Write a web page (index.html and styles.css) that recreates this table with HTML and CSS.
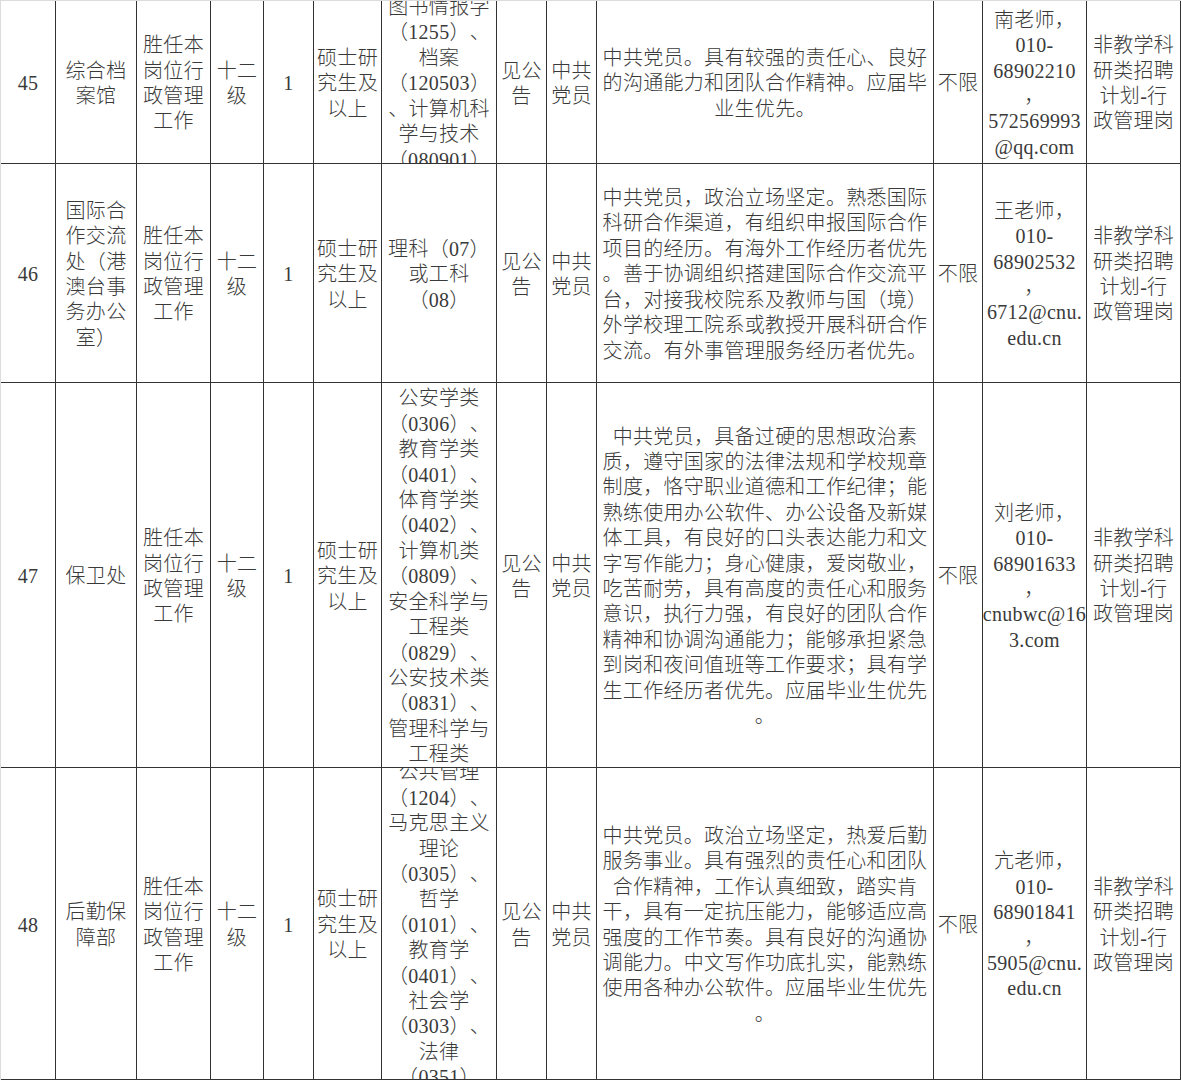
FILE: index.html
```html
<!DOCTYPE html>
<html lang="zh-CN">
<head>
<meta charset="utf-8">
<title>招聘岗位表</title>
<link rel="stylesheet" href="styles.css">
</head>
<body>
<div class="sheet">
  <!-- 45 -->
  <div class="c">45</div>
  <div class="c">综合档<br>案馆</div>
  <div class="c">胜任本<br>岗位行<br>政管理<br>工作</div>
  <div class="c">十二<br>级</div>
  <div class="c">1</div>
  <div class="c">硕士研<br>究生及<br>以上</div>
  <div class="c">图书情报学<br>（1255）、<br>档案<br>（120503）<br>、计算机科<br>学与技术<br>（080901）</div>
  <div class="c">见公<br>告</div>
  <div class="c">中共<br>党员</div>
  <div class="c">中共党员。具有较强的责任心、良好<br>的沟通能力和团队合作精神。应届毕<br>业生优先。</div>
  <div class="c">不限</div>
  <div class="c">南老师，<br>010-<br>68902210<br>，<br>572569993<br>@qq.com</div>
  <div class="c">非教学科<br>研类招聘<br>计划-行<br>政管理岗</div>

  <!-- 46 -->
  <div class="c">46</div>
  <div class="c">国际合<br>作交流<br>处（港<br>澳台事<br>务办公<br>室）</div>
  <div class="c">胜任本<br>岗位行<br>政管理<br>工作</div>
  <div class="c">十二<br>级</div>
  <div class="c">1</div>
  <div class="c">硕士研<br>究生及<br>以上</div>
  <div class="c">理科（07）<br>或工科<br>（08）</div>
  <div class="c">见公<br>告</div>
  <div class="c">中共<br>党员</div>
  <div class="c">中共党员，政治立场坚定。熟悉国际<br>科研合作渠道，有组织申报国际合作<br>项目的经历。有海外工作经历者优先<br>。善于协调组织搭建国际合作交流平<br>台，对接我校院系及教师与国（境）<br>外学校理工院系或教授开展科研合作<br>交流。有外事管理服务经历者优先。</div>
  <div class="c">不限</div>
  <div class="c">王老师，<br>010-<br>68902532<br>，<br>6712@cnu.<br>edu.cn</div>
  <div class="c">非教学科<br>研类招聘<br>计划-行<br>政管理岗</div>

  <!-- 47 -->
  <div class="c">47</div>
  <div class="c">保卫处</div>
  <div class="c">胜任本<br>岗位行<br>政管理<br>工作</div>
  <div class="c">十二<br>级</div>
  <div class="c">1</div>
  <div class="c">硕士研<br>究生及<br>以上</div>
  <div class="c">公安学类<br>（0306）、<br>教育学类<br>（0401）、<br>体育学类<br>（0402）、<br>计算机类<br>（0809）、<br>安全科学与<br>工程类<br>（0829）、<br>公安技术类<br>（0831）、<br>管理科学与<br>工程类</div>
  <div class="c">见公<br>告</div>
  <div class="c">中共<br>党员</div>
  <div class="c">中共党员，具备过硬的思想政治素<br>质，遵守国家的法律法规和学校规章<br>制度，恪守职业道德和工作纪律；能<br>熟练使用办公软件、办公设备及新媒<br>体工具，有良好的口头表达能力和文<br>字写作能力；身心健康，爱岗敬业，<br>吃苦耐劳，具有高度的责任心和服务<br>意识，执行力强，有良好的团队合作<br>精神和协调沟通能力；能够承担紧急<br>到岗和夜间值班等工作要求；具有学<br>生工作经历者优先。应届毕业生优先<br>。</div>
  <div class="c">不限</div>
  <div class="c">刘老师，<br>010-<br>68901633<br>，<br>cnubwc@16<br>3.com</div>
  <div class="c">非教学科<br>研类招聘<br>计划-行<br>政管理岗</div>

  <!-- 48 -->
  <div class="c">48</div>
  <div class="c">后勤保<br>障部</div>
  <div class="c">胜任本<br>岗位行<br>政管理<br>工作</div>
  <div class="c">十二<br>级</div>
  <div class="c">1</div>
  <div class="c">硕士研<br>究生及<br>以上</div>
  <div class="c">公共管理<br>（1204）、<br>马克思主义<br>理论<br>（0305）、<br>哲学<br>（0101）、<br>教育学<br>（0401）、<br>社会学<br>（0303）、<br>法律<br>（0351）</div>
  <div class="c">见公<br>告</div>
  <div class="c">中共<br>党员</div>
  <div class="c">中共党员。政治立场坚定，热爱后勤<br>服务事业。具有强烈的责任心和团队<br>合作精神，工作认真细致，踏实肯<br>干，具有一定抗压能力，能够适应高<br>强度的工作节奏。具有良好的沟通协<br>调能力。中文写作功底扎实，能熟练<br>使用各种办公软件。应届毕业生优先<br>。</div>
  <div class="c">不限</div>
  <div class="c">亢老师，<br>010-<br>68901841<br>，<br>5905@cnu.<br>edu.cn</div>
  <div class="c">非教学科<br>研类招聘<br>计划-行<br>政管理岗</div>
</div>
</body>
</html>
```

FILE: styles.css
```css
html, body {
  margin: 0;
  padding: 0;
  background: #ffffff;
}

body {
  width: 1181px;
  height: 1080px;
  overflow: hidden;
  font-family: "Liberation Serif", "Noto Sans CJK SC", serif;
  font-size: 20px;
  font-weight: 300;
  letter-spacing: 0.3px;
  line-height: 25.4px;
  color: #3a3a3a;
  text-spacing-trim: space-all;
}

.sheet {
  display: grid;
  grid-template-columns: 55px 81px 74px 53px 50px 68px 115px 50px 50px 337px 49px 104px 94px;
  grid-template-rows: 163px 219px 385px 312px;
  width: 1180px;
  border-top: 1px solid #dcdcdc;
  border-left: 1px solid #dcdcdc;
}

.c {
  box-sizing: border-box;
  display: flex;
  align-items: center;
  justify-content: center;
  text-align: center;
  white-space: nowrap;
  overflow: hidden;
  padding-top: 4px;
  border-right: 1px solid #333333;
  border-bottom: 1px solid #333333;
}
```
